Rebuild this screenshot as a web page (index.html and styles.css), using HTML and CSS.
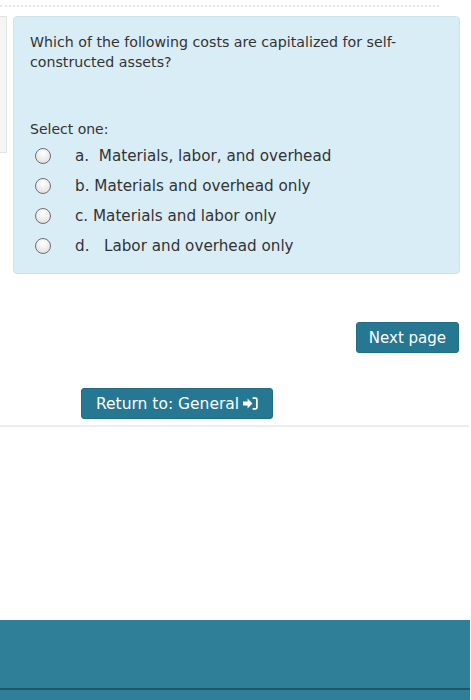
FILE: index.html
```html
<!DOCTYPE html>
<html lang="en">
<head>
    <meta charset="UTF-8">
    <meta name="viewport" content="width=device-width, initial-scale=1.0">
    <title>Quiz</title>
    <link rel="stylesheet" href="styles.css">
</head>
<body>
    <div class="page">
        <div class="dots"></div>

        <div class="question-row">
            <div class="side-info"></div>
            <div class="formulation">
                <p class="qtext">Which of the following costs are capitalized for self-constructed assets?</p>
                <div class="prompt">Select one:</div>
                <div class="answers">
                    <label class="answer"><span class="radio"></span><span class="opt">a.&nbsp;&nbsp;Materials, labor, and overhead</span></label>
                    <label class="answer"><span class="radio"></span><span class="opt">b. Materials and overhead only</span></label>
                    <label class="answer"><span class="radio"></span><span class="opt">c. Materials and labor only</span></label>
                    <label class="answer"><span class="radio"></span><span class="opt">d.&nbsp;&nbsp; Labor and overhead only</span></label>
                </div>
            </div>
        </div>

        <div class="nav-row">
            <button class="btn">Next page</button>
        </div>

        <div class="return-row">
            <button class="btn btn-return">Return to: General
                <svg class="icon" width="15" height="13" viewBox="0 0 15 13">
                    <path d="M0 4.6h4.6V1.6L9.4 6.5 4.6 11.4V8.4H0z" fill="#fff"/>
                    <path d="M9.6 1.2h3a1.3 1.3 0 0 1 1.3 1.3v8a1.3 1.3 0 0 1-1.3 1.3h-3" fill="none" stroke="#fff" stroke-width="1.7"/>
                </svg>
            </button>
        </div>
    </div>

    <footer class="footer">
        <div class="footer-line"></div>
    </footer>
</body>
</html>
```

FILE: styles.css
```css
body {
    margin: 0;
    font-family: Verdana, "DejaVu Sans", sans-serif;
    font-size: 14px;
    color: #333;
    background-color: #fff;
}

.page {
    width: 469px;
    height: 620px;
}

.dots {
    height: 5px;
    margin-right: 30px;
    border-bottom: 2px dotted #e6e6e6;
}

.question-row {
    display: flex;
    margin-top: 7px;
    height: 260px;
}

.side-info {
    width: 6px;
    height: 135px;
    margin-top: 2px;
    background-color: #f5f5f5;
    border: 1px solid #e3e3e3;
    border-left: 0;
}

.formulation {
    flex: 1;
    margin-left: 6px;
    margin-right: 9px;
    margin-top: 2px;
    background-color: #d9edf7;
    border: 1px solid #cde4ef;
    border-radius: 4px;
    padding: 15px 16px 0 16px;
}

.qtext {
    margin: 0;
    font-size: 14.2px;
    line-height: 20px;
    padding-right: 40px;
}

.prompt {
    margin-top: 47px;
    line-height: 20px;
}

.answers {
    margin-top: 2px;
}

.answer {
    display: flex;
    align-items: center;
    height: 30px;
    padding-left: 5px;
}

.radio {
    width: 14px;
    height: 14px;
    border-radius: 50%;
    border: 1px solid #6f6f6f;
    background: radial-gradient(circle at 50% 30%, #ffffff 0%, #e6e6e6 70%, #cfcfcf 100%);
    margin-right: 24px;
}

.opt {
    font-size: 15.2px;
    line-height: 20px;
}

.nav-row {
    display: flex;
    justify-content: flex-end;
    padding-right: 10px;
    margin-top: 48px;
}

.btn {
    font-family: Verdana, "DejaVu Sans", sans-serif;
    font-size: 15px;
    color: #fff;
    background-color: #267791;
    border: 1px solid #226c84;
    border-radius: 3px;
    height: 31px;
    padding: 0 12px;
    display: flex;
    align-items: center;
    gap: 3px;
}

.btn-return {
    font-size: 15.5px;
    padding: 0 14px;
    gap: 4px;
}

.return-row {
    margin-top: 35px;
    padding-left: 81px;
    padding-bottom: 6px;
    border-bottom: 2px solid #ececec;
}

.footer {
    width: 470px;
    height: 80px;
    background-color: #2e7f97;
    display: flex;
    flex-direction: column;
    justify-content: flex-end;
}

.footer-line {
    height: 2px;
    background-color: #1f5566;
    margin-bottom: 10px;
}
```
